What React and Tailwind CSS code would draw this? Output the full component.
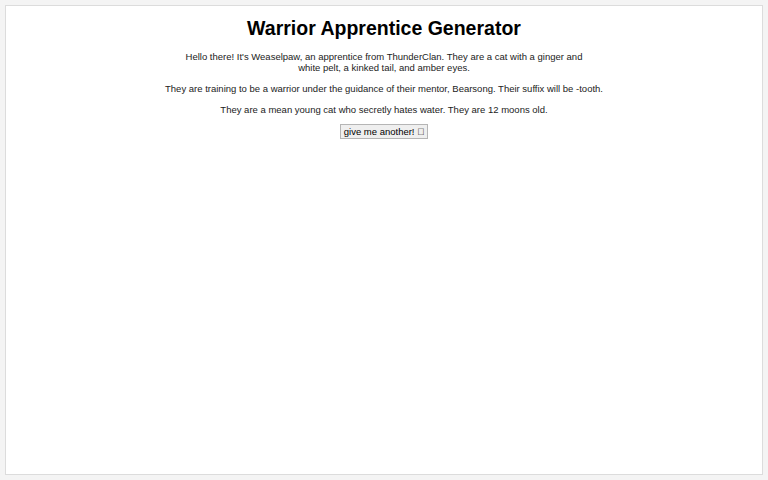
import React, { useState } from "react";

const cats = [
  {
    name: "Weaselpaw",
    clan: "ThunderClan",
    pelt: "ginger and white",
    tail: "kinked",
    eyes: "amber",
    mentor: "Bearsong",
    suffix: "-tooth",
    trait: "mean",
    secret: "secretly hates water",
    age: 12,
  },
];

function App() {
  const [index, setIndex] = useState(0);
  const cat = cats[index];

  return (
    <div className="min-h-screen bg-[#f4f4f4] p-[5px] font-['Liberation_Sans',Arial,sans-serif] text-black">
      <div className="h-[470px] bg-white border border-[#dcdcdc] flex flex-col items-center">
        <h1 className="mt-[9px] text-[19.5px] font-bold leading-[26px]">
          Warrior Apprentice Generator
        </h1>

        <p className="mt-[10px] max-w-[404px] text-center text-[9.5px] leading-[11px] text-[#222]">
          Hello there! It's {cat.name}, an apprentice from {cat.clan}. They are a cat with a{" "}
          {cat.pelt} pelt, a {cat.tail} tail, and {cat.eyes} eyes.
        </p>
        <p className="mt-[10px] text-center text-[9.5px] leading-[11px] text-[#222]">
          They are training to be a warrior under the guidance of their mentor, {cat.mentor}. Their
          suffix will be {cat.suffix}.
        </p>
        <p className="mt-[10px] text-center text-[9.5px] leading-[11px] text-[#222]">
          They are a {cat.trait} young cat who {cat.secret}. They are {cat.age} moons old.
        </p>

        <button
          onClick={() => setIndex((index + 1) % cats.length)}
          className="mt-[9px] px-[3px] h-[15px] text-[9.5px] leading-[13px] border border-[#b5b5b5] bg-[#efefef] text-black"
        >
          give me another! {"\uE000"}
        </button>
      </div>
    </div>
  );
}

export default App;
